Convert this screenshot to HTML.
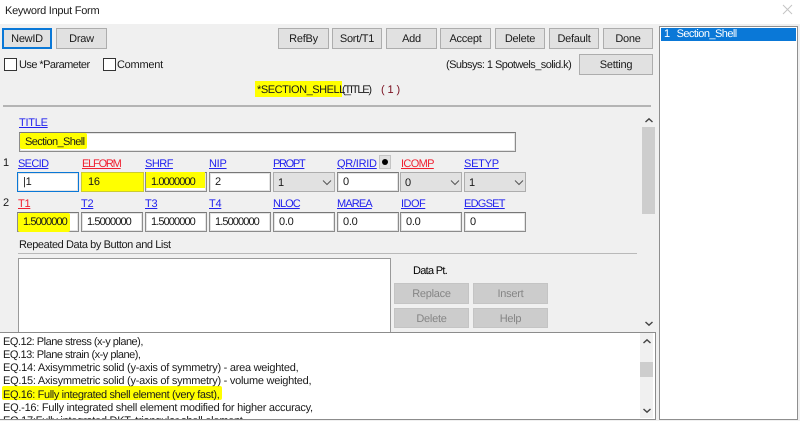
<!DOCTYPE html>
<html><head><meta charset="utf-8"><style>
html,body{margin:0;padding:0}
body{width:800px;height:421px;overflow:hidden;background:#f0f0f0;position:relative;font-family:"Liberation Sans",sans-serif;font-size:11px;letter-spacing:-.26px;color:#1a1a1a;text-rendering:geometricPrecision}
.a{position:absolute;box-sizing:border-box;white-space:nowrap}
.t{line-height:14px;height:15px;padding-top:1px}
.b{border:1px solid #adadad;background:#e1e1e1;text-align:center;line-height:20px}
.d{border:1px solid #c4c4c4;background:#cccccc;color:#858585;text-align:center;line-height:20px}
.i{border:1px solid #8c8c8c;border-top-color:#777;background:#fff;height:20px;line-height:18px;padding-left:5px;box-shadow:inset 0 0 0 1px #e4e4e4}
.n{letter-spacing:-.9px}
.s{border:1px solid #adadad;background:#e1e1e1;height:20px;line-height:20px;padding-left:4px}
.l{color:#2222ee;text-decoration:underline;line-height:14px;height:15px;padding-top:1px}
.r{color:#f01f2f;text-decoration:underline;line-height:14px;height:15px;padding-top:1px}
.y{background:#ffff00}
svg{position:absolute;overflow:visible}
</style></head><body>
<div class="a" style="left:0;top:0;width:800px;height:24px;background:#fff"></div>
<div class="a t" style="left:5px;top:3px">Keyword Input Form</div>
<svg style="left:783px;top:5px" width="10" height="10"><path d="M0 0L9 9M9 0L0 9" stroke="#c4c4c4" stroke-width="1" fill="none"/></svg>

<div class="a b" style="left:2px;top:28px;width:50px;height:21px;border:2px solid #0a78d7;line-height:18px">NewID</div>
<div class="a b" style="left:56px;top:28px;width:51px;height:21px">Draw</div>
<div class="a b" style="left:278px;top:28px;width:51px;height:21px">RefBy</div>
<div class="a b" style="left:332px;top:28px;width:50px;height:21px">Sort/T1</div>
<div class="a b" style="left:386px;top:28px;width:51px;height:21px">Add</div>
<div class="a b" style="left:440px;top:28px;width:51px;height:21px">Accept</div>
<div class="a b" style="left:495px;top:28px;width:50px;height:21px">Delete</div>
<div class="a b" style="left:549px;top:28px;width:50px;height:21px">Default</div>
<div class="a b" style="left:603px;top:28px;width:50px;height:21px">Done</div>
<div class="a b" style="left:579px;top:54px;width:74px;height:21px">Setting</div>

<div class="a" style="left:4px;top:58px;width:13px;height:13px;border:1px solid #333;background:#fff"></div>
<div class="a t" style="left:19px;top:57px;letter-spacing:-.55px">Use *Parameter</div>
<div class="a" style="left:103px;top:58px;width:13px;height:13px;border:1px solid #333;background:#fff"></div>
<div class="a t" style="left:117px;top:57px">Comment</div>
<div class="a t" style="left:446px;top:57px;letter-spacing:-.55px">(Subsys: 1 Spotwels_solid.k)</div>

<div class="a y" style="left:255px;top:81px;width:87px;height:16px"></div>
<div class="a t" style="left:257px;top:82px;letter-spacing:-.45px">*SECTION_SHELL_</div>
<div class="a t" style="left:342px;top:82px;letter-spacing:-1.2px">(TITLE)</div>
<div class="a t" style="left:381px;top:82px;color:#7a1020;letter-spacing:-.6px;word-spacing:1px">( 1 )</div>
<div class="a" style="left:3px;top:105px;width:648px;height:2px;background:#b4b4b4"></div>

<div class="a l" style="left:19px;top:115px">TITLE</div>
<div class="a i" style="left:19px;top:132px;width:497px"></div>
<div class="a y" style="left:20px;top:133px;width:67px;height:16px;border-radius:2px"></div>
<div class="a t" style="left:25px;top:134px;letter-spacing:-.6px">Section_Shell</div>

<div class="a t" style="left:3px;top:155px">1</div>
<div class="a l" style="left:18px;top:156px;letter-spacing:-.65px">SECID</div>
<div class="a r" style="left:82px;top:156px;letter-spacing:-1.2px">ELFORM</div>
<div class="a l" style="left:145px;top:156px;letter-spacing:-.5px">SHRF</div>
<div class="a l" style="left:209px;top:156px">NIP</div>
<div class="a l" style="left:273px;top:156px;letter-spacing:-1.3px">PROPT</div>
<div class="a l" style="left:337px;top:156px">QR/IRID</div>
<div class="a r" style="left:401px;top:156px;letter-spacing:-.65px">ICOMP</div>
<div class="a l" style="left:464px;top:156px">SETYP</div>
<div class="a" style="left:379px;top:155px;width:12px;height:14px;background:#e1e1e1;border:1px solid #c4c4c4"></div>
<div class="a" style="left:382px;top:159px;width:6px;height:6px;border-radius:50%;background:#000"></div>

<div class="a i" style="left:17px;top:172px;width:62px;border:1px solid #0a78d7;padding-left:5px">|1</div>
<div class="a i" style="left:81px;top:172px;width:63px;background:#ffff00;box-shadow:none;border-color:#cccc30;padding-left:6px">16</div>
<div class="a i" style="left:145px;top:172px;width:62px"></div>
<div class="a y" style="left:146px;top:172px;width:59px;height:16px"></div>
<div class="a t n" style="left:151px;top:174px">1.0000000</div>
<div class="a i" style="left:209px;top:172px;width:62px">2</div>
<div class="a s" style="left:273px;top:172px;width:62px">1</div>
<div class="a i" style="left:337px;top:172px;width:62px">0</div>
<div class="a s" style="left:400px;top:172px;width:62px">0</div>
<div class="a s" style="left:464px;top:172px;width:62px">1</div>
<svg style="left:323px;top:180px" width="9" height="6"><path d="M0 0.5L4 4.5L8 0.5" stroke="#555" fill="none"/></svg>
<svg style="left:451px;top:180px" width="9" height="6"><path d="M0 0.5L4 4.5L8 0.5" stroke="#555" fill="none"/></svg>
<svg style="left:515px;top:180px" width="9" height="6"><path d="M0 0.5L4 4.5L8 0.5" stroke="#555" fill="none"/></svg>

<div class="a t" style="left:3px;top:195px">2</div>
<div class="a r" style="left:18px;top:196px">T1</div>
<div class="a l" style="left:81px;top:196px">T2</div>
<div class="a l" style="left:145px;top:196px">T3</div>
<div class="a l" style="left:209px;top:196px">T4</div>
<div class="a l" style="left:273px;top:196px;letter-spacing:-.95px">NLOC</div>
<div class="a l" style="left:337px;top:196px;letter-spacing:-.85px">MAREA</div>
<div class="a l" style="left:401px;top:196px;letter-spacing:-.5px">IDOF</div>
<div class="a l" style="left:464px;top:196px;letter-spacing:-.75px">EDGSET</div>

<div class="a i" style="left:17px;top:212px;width:62px"></div>
<div class="a y" style="left:18px;top:213px;width:52px;height:19px;border-radius:2px"></div>
<div class="a t n" style="left:23px;top:214px">1.5000000</div>
<div class="a i n" style="left:81px;top:212px;width:62px">1.5000000</div>
<div class="a i n" style="left:145px;top:212px;width:62px">1.5000000</div>
<div class="a i n" style="left:209px;top:212px;width:62px">1.5000000</div>
<div class="a i" style="left:273px;top:212px;width:62px">0.0</div>
<div class="a i" style="left:337px;top:212px;width:62px">0.0</div>
<div class="a i" style="left:400px;top:212px;width:62px">0.0</div>
<div class="a i" style="left:464px;top:212px;width:62px">0</div>

<div class="a t" style="left:19px;top:237px;letter-spacing:-.42px">Repeated Data by Button and List</div>
<div class="a" style="left:18px;top:253px;width:619px;height:1px;background:#b9b9b9"></div>
<div class="a" style="left:18px;top:258px;width:373px;height:76px;background:#fff;border:1px solid #9a9a9a"></div>
<div class="a t" style="left:413px;top:263px;color:#000;letter-spacing:-.7px">Data Pt.</div>
<div class="a d" style="left:394px;top:283px;width:75px;height:21px">Replace</div>
<div class="a d" style="left:473px;top:283px;width:75px;height:21px">Insert</div>
<div class="a d" style="left:394px;top:308px;width:75px;height:20px">Delete</div>
<div class="a d" style="left:473px;top:308px;width:75px;height:20px">Help</div>

<div class="a" style="left:642px;top:112px;width:14px;height:220px;background:#f0f0f0"></div>
<div class="a" style="left:642px;top:127px;width:13px;height:87px;background:#cdcdcd"></div>
<svg style="left:645px;top:118px" width="8" height="5"><path d="M0.5 4L4 0.8L7.5 4" stroke="#444" stroke-width="1.4" fill="none"/></svg>
<svg style="left:645px;top:321px" width="8" height="5"><path d="M0.5 1L4 4.2L7.5 1" stroke="#444" stroke-width="1.4" fill="none"/></svg>

<div class="a" style="left:0;top:332px;width:656px;height:88px;background:#fff;border:1px solid #8c8c8c;border-left:0"></div>
<div class="a y" style="left:2px;top:386px;width:220px;height:14px;border-radius:2px"></div>
<div class="a" style="left:3px;top:334px;width:630px;height:85px;overflow:hidden;line-height:13.15px;white-space:nowrap;padding-top:2px"><span style="letter-spacing:-.5px">EQ.12: Plane stress (x-y plane),</span><br><span style="letter-spacing:-.5px">EQ.13: Plane strain (x-y plane),</span><br>EQ.14: Axisymmetric solid (y-axis of symmetry) - area weighted,<br>EQ.15: Axisymmetric solid (y-axis of symmetry) - volume weighted,<br><span style="letter-spacing:-.38px">EQ.16: Fully integrated shell element (very fast),</span><br>EQ.-16: Fully integrated shell element modified for higher accuracy,<br>EQ.17:Fully integrated DKT, triangular shell element</div>
<div class="a" style="left:640px;top:333px;width:13px;height:85px;background:#f0f0f0"></div>
<div class="a" style="left:640px;top:362px;width:13px;height:15px;background:#cdcdcd"></div>
<svg style="left:643px;top:339px" width="8" height="5"><path d="M0.5 4L4 0.8L7.5 4" stroke="#444" stroke-width="1.4" fill="none"/></svg>
<svg style="left:643px;top:408px" width="8" height="5"><path d="M0.5 1L4 4.2L7.5 1" stroke="#444" stroke-width="1.4" fill="none"/></svg>

<div class="a" style="left:659px;top:26px;width:139px;height:394px;background:#fff;border:1px solid #8f8f8f"></div>
<div class="a" style="left:661px;top:28px;width:135px;height:13px;background:#0a78d7;color:#fff;line-height:13px;padding-left:3px;letter-spacing:-.55px"><span style="margin-right:7px">1</span>Section_Shell</div>
</body></html>
